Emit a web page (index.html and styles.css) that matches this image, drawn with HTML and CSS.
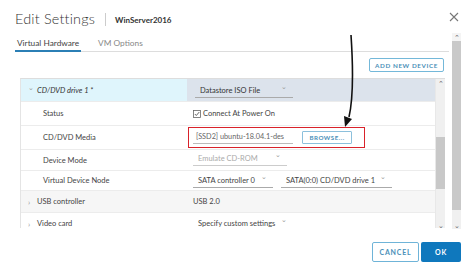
FILE: index.html
```html
<!DOCTYPE html>
<html>
<head>
<meta charset="utf-8">
<link rel="stylesheet" href="styles.css">
</head>
<body>
<div class="dialog">
  <div class="head">
    <span class="title">Edit Settings</span>
    <span class="sep"></span>
    <span class="vm">WinServer2016</span>
    <svg class="close" width="10" height="10" viewBox="0 0 10 10"><path d="M1 1L9 9M9 1L1 9" stroke="#777" stroke-width="1.1"/></svg>
  </div>
  <div class="body">
    <div class="main">
      <div class="tabs">
        <span class="tab active">Virtual Hardware</span>
        <span class="tab">VM Options</span>
      </div>
      <div class="actions"><span class="btn-outline">ADD NEW DEVICE</span></div>
      <div class="table">
        <div class="rows">
          <div class="row hdr">
            <div class="lbl top"><span class="chev">&#8964;</span><i>CD/DVD drive 1 *</i></div>
            <div class="val"><span class="select w98 first">Datastore ISO File<span class="dd">&#8964;</span></span></div>
          </div>
          <div class="row h24">
            <div class="lbl sub">Status</div>
            <div class="val"><span class="check"><svg class="cb" width="8" height="8" viewBox="0 0 8 8"><rect x="0.5" y="0.5" width="7" height="7" fill="none" stroke="#666" stroke-width="0.8"/><path d="M1.8 4L3.3 5.5L6.3 2" fill="none" stroke="#555" stroke-width="0.9"/></svg>Connect At Power On</span></div>
          </div>
          <div class="row h24">
            <div class="lbl sub">CD/DVD Media</div>
            <div class="val">
              <div class="redbox">
                <span class="input">[SSD2] ubuntu-18.04.1-des</span>
                <span class="browse">BROWSE...</span>
              </div>
            </div>
          </div>
          <div class="row h21">
            <div class="lbl sub">Device Mode</div>
            <div class="val"><span class="select w94 dim">Emulate CD-ROM<span class="dd">&#8964;</span></span></div>
          </div>
          <div class="row h20">
            <div class="lbl sub">Virtual Device Node</div>
            <div class="val"><span class="select w80">SATA controller 0<span class="dd">&#8964;</span></span><span class="select w111">SATA(0:0) CD/DVD drive 1<span class="dd">&#8964;</span></span></div>
          </div>
          <div class="row h22 grey">
            <div class="lbl top"><span class="chev r">&#8250;</span>USB controller</div>
            <div class="val">USB 2.0</div>
          </div>
          <div class="row h22">
            <div class="lbl top"><span class="chev r">&#8250;</span>Video card</div>
            <div class="val"><span class="plain">Specify custom settings<span class="dd inl">&#8964;</span></span></div>
          </div>
        </div>
        <div class="sb inner">
          <span class="arr up">&#8963;</span>
          <span class="trk1"></span>
          <span class="thumb"></span>
          <span class="trk2"></span>
          <span class="arr dn">&#8964;</span>
        </div>
      </div>
    </div>
    <div class="sb outer">
      <span class="arr up">&#8963;</span>
      <span class="thumb"></span>
      <span class="trk2"></span>
      <span class="arr dn">&#8964;</span>
    </div>
  </div>
  <div class="foot">
    <span class="btn cancel">CANCEL</span>
    <span class="btn ok">OK</span>
  </div>
  <svg class="arrow" width="30" height="100" viewBox="0 0 30 100">
    <path d="M18 0 C20 30 21 60 16 82" fill="none" stroke="#111" stroke-width="1.6"/>
    <path d="M11 81 L19 84 L12 92 Z" fill="#111"/>
  </svg>
</div>
</body>
</html>
```
FILE: styles.css
```css
* { box-sizing: border-box; }
html, body { margin: 0; padding: 0; background: #fff; }
body { font-family: "Lato", "Open Sans", sans-serif; color: #444; width: 474px; height: 275px; overflow: hidden; }
.dialog { position: relative; width: 474px; height: 275px; }
.head { height: 33px; display: flex; align-items: center; padding: 4px 0 0 15px; }
.title { font-size: 14.4px; font-weight: 300; color: #333; letter-spacing: 0.2px; }
.sep { width: 1px; height: 13px; background: #ccc; margin: 2px 9px 0 10px; }
.vm { font-size: 8px; font-weight: 700; color: #333; margin-top: 2px; }
.close { margin-left: auto; margin-right: 15px; margin-top: -3px; }
.body { display: flex; height: 196px; padding-left: 15px; }
.main { width: 434px; display: flex; flex-direction: column; overflow: hidden; }
.tabs { height: 19px; border-bottom: 1px solid #ddd; display: flex; gap: 17px; padding-left: 2px; align-items: flex-start; padding-top: 5px; }
.tab { font-size: 8.3px; color: #888; height: 14px; line-height: 10px; }
.tab.active { color: #444; border-bottom: 2px solid #2b7fb5; margin-left: -2px; padding: 0 2px; height: 14px; }
.actions { display: flex; justify-content: flex-end; padding: 6px 5px 0 0; height: 26px; }
.btn-outline { width: 75px; height: 14px; border: 1px solid #74b8d9; border-radius: 2px; color: #4a8fb8; font-size: 6.3px; font-weight: 700; letter-spacing: 0.6px; display: flex; align-items: center; justify-content: center; }
.table { margin-left: 5px; width: 425px; border-top: 1px solid #ddd; border-left: 1px solid #e4e4e4; display: flex; height: 150px; overflow: hidden; }
.rows { width: 414px; font-size: 7.5px; color: #444; }
.row { display: flex; border-bottom: 1px solid #ececec; align-items: center; }
.row.hdr { height: 23px; }
.h24 { height: 24px; }
.h21 { height: 21px; }
.h20 { height: 20px; }
.h22 { height: 22px; }
.row.grey { background: #f6f6f6; }
.lbl { width: 166px; height: 100%; display: flex; align-items: center; }
.lbl.top { padding-left: 7px; }
.lbl.sub { padding-left: 22px; }
.hdr .lbl { background: #dff5fc; }
.hdr .val { background: #dce3ec; }
.hdr i { font-size: 7.5px; color: #333; }
.chev { display: inline-block; width: 9px; color: #999; font-size: 7px; margin-top: -5px; }
.chev.r { margin-top: 0; font-size: 8px; }
.val { flex: 1; height: 100%; display: flex; align-items: center; padding-left: 6px; gap: 8px; }
.check { display: inline-flex; align-items: center; gap: 2px; }
.select { position: relative; border-bottom: 1px solid #aaa; height: 12px; line-height: 9px; padding-left: 5px; display: inline-block; white-space: nowrap; }
.hdr .select { color: #333; }
.w98 { width: 98px; margin-left: 2px; margin-top: 3px; }
.w94 { width: 94px; }
.w80 { width: 80px; margin-top: 3px; }
.w111 { width: 111px; margin-top: 3px; }
.dim { color: #aaa; border-bottom-color: #ccc; }
.dd { position: absolute; right: 6px; top: -4px; font-size: 7px; color: #999; }
.plain { padding-left: 5px; display: inline-flex; }
.dd.inl { position: static; margin-left: 6px; margin-top: -4px; }
.redbox { margin-left: -5px; width: 177px; height: 21px; border: 1.5px solid #d9222a; display: flex; align-items: center; padding-left: 4px; }
.input { width: 100px; border-bottom: 1px solid #bbb; height: 12px; line-height: 9px; font-size: 7.3px; color: #666; white-space: nowrap; overflow: hidden; padding-left: 3px; }
.browse { margin-left: 9px; width: 50px; height: 13px; border: 1px solid #8cc0dc; color: #4a8fb8; font-size: 6.2px; font-weight: 700; letter-spacing: 0.5px; display: flex; align-items: center; justify-content: center; border-radius: 1px; }
.sb { display: flex; flex-direction: column; align-items: stretch; }
.sb .arr { height: 8px; font-size: 7px; line-height: 8px; color: #666; text-align: center; }
.sb.inner { width: 10px; background: #f0f0f0; height: 150px; border-left: 1px solid #e8e8e8; }
.inner .trk1 { height: 50px; }
.inner .thumb { height: 52px; background: #c8c8c8; }
.inner .trk2 { flex: 1; }
.sb.outer { width: 9px; margin-left: 3px; background: #c9c9c9; }
.outer .up { background: #f4f4f4; }
.outer .thumb { height: 169px; }
.outer .trk2 { flex: 1; background: #f0f0f0; }
.outer .dn { background: #f0f0f0; }
.foot { display: flex; justify-content: flex-end; gap: 2px; padding: 13px 13px 0 0; }
.btn { height: 20px; display: flex; align-items: center; justify-content: center; font-size: 7px; font-weight: 700; letter-spacing: 0.8px; border-radius: 2px; }
.cancel { width: 47px; border: 1px solid #6fb4d8; color: #4a8fb8; background: #fff; }
.ok { width: 40px; background: #0f78bd; color: #fff; }
.arrow { position: absolute; left: 333px; top: 35px; }
```
